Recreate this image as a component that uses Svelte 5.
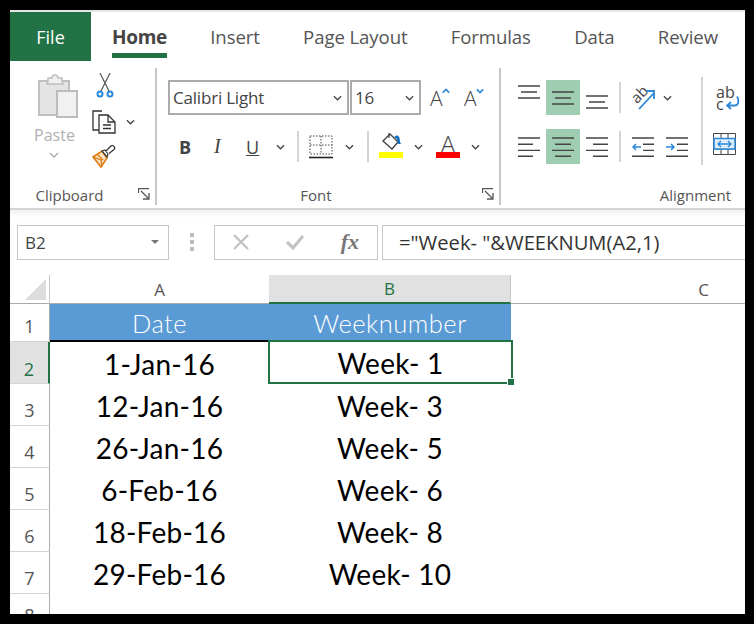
<script>
  const tabs = ["Home", "Insert", "Page Layout", "Formulas", "Data", "Review"];
  const rows = [
    { n: 2, date: "1-Jan-16", week: "Week- 1" },
    { n: 3, date: "12-Jan-16", week: "Week- 3" },
    { n: 4, date: "26-Jan-16", week: "Week- 5" },
    { n: 5, date: "6-Feb-16", week: "Week- 6" },
    { n: 6, date: "18-Feb-16", week: "Week- 8" },
    { n: 7, date: "29-Feb-16", week: "Week- 10" }
  ];
</script>

{#snippet chevron()}
  <svg class="chev" width="9" height="6" viewBox="0 0 10 6"><path d="M1 1l4 4 4-4" fill="none" stroke="#444" stroke-width="1.4"/></svg>
{/snippet}

{#snippet launcher()}
  <svg class="launcher" width="12" height="12" viewBox="0 0 12 12"><path d="M.5 5V.5H11M3 3l7 7M5 11h6V5" fill="none" stroke="#555" stroke-width="1.3"/></svg>
{/snippet}

{#snippet vlines()}
  <svg width="22" height="14" viewBox="0 0 22 14" fill="none" stroke="#444" stroke-width="1.4"><path d="M0 1h22M3 7h16M0 13h22"/></svg>
{/snippet}

{#snippet lines(kind)}
  <svg width="22" height="20" viewBox="0 0 22 20" fill="none" stroke="#444" stroke-width="1.4">
    {#if kind === "left"}
      <path d="M0 1h22M0 7.200h15M0 13.400h22M0 19.200h15"/>
    {:else if kind === "center"}
      <path d="M0 1h22M3 7.200h16M0 13.400h22M3 19.200h16"/>
    {:else}
      <path d="M0 1h22M7 7.200h15M0 13.400h22M7 19.200h15"/>
    {/if}
  </svg>
{/snippet}

<div class="frame">
  <div class="window">
    <nav class="tabs">
      <div class="file">File</div>
      {#each tabs as tab, i}
        <div class="tab" class:active={i === 0}>{tab}</div>
      {/each}
    </nav>

    <div class="ribbon">
      <section class="group clipboard">
        <div class="group-body clip-body">
          <div class="paste">
            <svg width="42" height="46" viewBox="0 0 42 46">
              <path d="M2 8h30v34H2z" fill="#e4e4e4" stroke="#c0c0c0" stroke-width="2"/>
              <path d="M11 8V5h4c0-4 6-4 6 0h4v3l1 3H10z" fill="#f0f0f0" stroke="#bdbdbd" stroke-width="1.500"/>
              <path d="M20 18h20v26H20z" fill="#f1f1f1" stroke="#bcbcbc" stroke-width="2"/>
            </svg>
            <span class="paste-label">Paste</span>
            <svg class="paste-chev" width="10" height="6" viewBox="0 0 10 6"><path d="M1 1l4 4 4-4" fill="none" stroke="#aaa" stroke-width="1.300"/></svg>
          </div>
          <div class="clip-tools">
            <svg class="scissors" width="18" height="25" viewBox="0 0 18 25" fill="none">
              <path d="M4 0l9 18M14 0L5 18" stroke="#555" stroke-width="1.200"/>
              <circle cx="4" cy="21" r="2.500" stroke="#2b88d8" stroke-width="2"/>
              <circle cx="14" cy="21" r="2.500" stroke="#2b88d8" stroke-width="2"/>
            </svg>
            <div class="copy-row">
              <svg width="25" height="25" viewBox="0 0 25 25" fill="none" stroke="#333" stroke-width="1.300">
                <path d="M7 21H1V2h9"/>
                <path d="M7 6h9l7 7v11H7z" fill="#fff"/>
                <path d="M16 6v7h7M11 16h8M11 19.500h8"/>
              </svg>
              {@render chevron()}
            </div>
            <svg width="25" height="23" viewBox="0 0 25 23" fill="none">
              <path d="M1 12l9-6 5 7-6 9z" fill="#fbe3c6" stroke="#e07c10" stroke-width="1.600"/>
              <path d="M1 12l8 3 1 7M5 9l6 6" stroke="#e07c10" stroke-width="1.300"/>
              <path d="M10 6l3-1 3 4-1 3z" fill="#fff" stroke="#333" stroke-width="1.200"/>
              <path d="M14 6l5-5c1-1 2-.5 3 .5s1 2 0 3l-5 4" fill="#fff" stroke="#333" stroke-width="1.200"/>
            </svg>
          </div>
        </div>
        <div class="group-foot"><span>Clipboard</span>{@render launcher()}</div>
      </section>

      <section class="group font">
        <div class="group-body font-body">
          <div class="font-row">
            <div class="combo face"><span>Calibri Light</span>{@render chevron()}</div>
            <div class="combo size"><span>16</span>{@render chevron()}</div>
            <div class="grow-btn">A<svg width="8" height="6" viewBox="0 0 10 6"><path d="M1 5l4-4 4 4" fill="none" stroke="#2b88d8" stroke-width="2"/></svg></div>
            <div class="grow-btn">A<svg width="8" height="6" viewBox="0 0 10 6"><path d="M1 1l4 4 4-4" fill="none" stroke="#2b88d8" stroke-width="2"/></svg></div>
          </div>
          <div class="style-row">
            <span class="fmt bold">B</span>
            <span class="fmt italic">I</span>
            <span class="fmt under">U</span>
            <span class="slot s1">{@render chevron()}</span>
            <i class="sep"></i>
            <svg class="borders" width="24" height="24" viewBox="0 0 24 24" fill="none">
              <path d="M1 1h22v18H1zM12 1v18M1 10h22" stroke="#444" stroke-width="1" stroke-dasharray="1.500 1.500"/>
              <path d="M0 22.500h24" stroke="#222" stroke-width="1.600"/>
            </svg>
            <span class="slot s2">{@render chevron()}</span>
            <i class="sep"></i>
            <div class="swatch-btn">
              <svg width="24" height="19" viewBox="0 0 24 19" fill="none">
                <path d="M4 9l7-7 8 8-6 7z" fill="#fff" stroke="#444" stroke-width="1.400"/>
                <path d="M10 1v5" stroke="#444" stroke-width="1.200"/>
                <path d="M15 5c3-3 6-2 6 5l1 2h-3l-1-5z" fill="#106ebe"/>
              </svg>
              <i class="yellow"></i>
            </div>
            <span class="slot s3">{@render chevron()}</span>
            <div class="swatch-btn color"><span>A</span><i class="red"></i></div>
            <span class="slot s4">{@render chevron()}</span>
          </div>
        </div>
        <div class="group-foot"><span class="font-label">Font</span>{@render launcher()}</div>
      </section>

      <section class="group align">
        <div class="align-grid">
          <div class="cell-btn end">{@render vlines()}</div>
          <div class="cell-btn on">{@render vlines()}</div>
          <div class="cell-btn low">{@render vlines()}</div>
          <i class="sep tall"></i>
          <div class="orient">
            <svg width="25" height="25" viewBox="0 0 25 25" fill="none">
              <text x="0" y="15" transform="rotate(-45 8 10)" font-size="15" fill="#444" font-family="Open Sans, sans-serif">ab</text>
              <path d="M8 24L23 8M15 6h8v8" stroke="#2b88d8" stroke-width="1.800"/>
            </svg>
            {@render chevron()}
          </div>
          <i class="big-sep"></i>
          <div class="wrap-icon">
            <span>ab<br />c</span>
            <svg width="14" height="14" viewBox="0 0 14 14" fill="none"><path d="M5 6L1 9.500 5 13M1 9.500h8c4 0 4-6 2-9" stroke="#2b88d8" stroke-width="1.800"/></svg>
          </div>

          <div class="cell-btn">{@render lines("left")}</div>
          <div class="cell-btn on">{@render lines("center")}</div>
          <div class="cell-btn">{@render lines("right")}</div>
          <i class="sep tall"></i>
          <div class="indents">
            <svg width="22" height="20" viewBox="0 0 22 20" fill="none"><path d="M0 1h22M11 7.200h11M11 13.400h11M0 19.200h22" stroke="#444" stroke-width="1.400"/><path d="M9 10H1M4 7l-3 3 3 3" stroke="#2b88d8" stroke-width="1.500"/></svg>
            <svg width="22" height="20" viewBox="0 0 22 20" fill="none"><path d="M0 1h22M11 7.200h11M11 13.400h11M0 19.200h22" stroke="#444" stroke-width="1.400"/><path d="M0 10h8M5 7l3 3-3 3" stroke="#2b88d8" stroke-width="1.500"/></svg>
          </div>
          <div class="merge">
            <svg width="23" height="22" viewBox="0 0 23 22" fill="none">
              <path d="M.5.500h22v21H.5zM8 .500v5M15 .500v5M8 16v5M15 16v5M.5 5.500h22M.5 16h22" stroke="#444"/>
              <path d="M1 5.500h21v10.500H1z" fill="#dcecf9" stroke="#2b88d8" stroke-width="1.500"/>
              <path d="M5 11h13M8 8l-3 3 3 3M15 8l3 3-3 3" stroke="#2b88d8" stroke-width="1.300"/>
            </svg>
          </div>
        </div>
        <div class="group-foot align-foot"><span>Alignment</span></div>
      </section>
    </div>

    <div class="formula-bar">
      <div class="name-box"><span>B2</span><i class="tri"></i></div>
      <div class="dots"><i></i><i></i><i></i></div>
      <div class="fx-buttons">
        <svg width="18" height="18" viewBox="0 0 18 18"><path d="M2 2l14 14M16 2L2 16" stroke="#c4c4c4" stroke-width="2.400"/></svg>
        <svg width="20" height="18" viewBox="0 0 20 18"><path d="M2 9l6 6L18 3" fill="none" stroke="#c4c4c4" stroke-width="3.200"/></svg>
        <span class="fx">fx</span>
      </div>
      <div class="formula">="Week- "&amp;WEEKNUM(A2,1)</div>
    </div>

    <div class="sheet">
      <div class="corner"><i></i></div>
      <div class="col">A</div>
      <div class="col sel">B</div>
      <div class="col">C</div>

      <div class="row-num first">1</div>
      <div class="cell head">Date</div>
      <div class="cell head">Weeknumber</div>
      <div class="blank"></div>

      {#each rows as row}
        <div class="row-num" class:sel={row.n === 2}>{row.n}</div>
        <div class="cell" class:under-head={row.n === 2}>{row.date}</div>
        <div class="cell" class:active={row.n === 2}>
          {row.week}
          {#if row.n === 2}<i class="handle"></i>{/if}
        </div>
        <div class="blank"></div>
      {/each}

      <div class="row-num partial">8</div>
      <div class="cell"></div>
      <div class="cell"></div>
      <div class="blank"></div>
    </div>
  </div>
</div>

<style>
  :global(body) {
    margin: 0;
    background: #000;
  }

  .frame {
    width: 754px;
    height: 624px;
    box-sizing: border-box;
    padding: 10px 9px 10px 10px;
    background: #000;
    font-family: "Open Sans", sans-serif;
    color: #444;
  }

  .window {
    height: 604px;
    background: #fff;
    overflow: hidden;
    border-top: 2px solid #e6e6e6;
    box-sizing: border-box;
  }

  .tabs {
    display: flex;
    align-items: stretch;
    height: 49px;
    gap: 43.3px;
    font-size: 18.6px;
  }

  .file {
    width: 81px;
    margin-right: -22.3px;
    background: #217346;
    color: #fff;
    font-size: 18px;
    display: flex;
    align-items: center;
    justify-content: center;
  }

  .tab {
    display: flex;
    align-items: center;
    position: relative;
    color: #555;
    letter-spacing: -0.1px;
  }

  .tab.active {
    font-weight: 700;
    font-size: 19px;
    letter-spacing: -0.3px;
    color: #444;
  }

  .tab.active::after {
    content: "";
    position: absolute;
    left: 0;
    right: 0;
    bottom: 3px;
    height: 5px;
    background: #217346;
  }

  .ribbon {
    display: flex;
    height: 149px;
    box-sizing: border-box;
    padding: 7px 0 3px;
    border-bottom: 2px solid #d4d4d4;
    overflow: hidden;
  }

  .group {
    display: flex;
    flex-direction: column;
    box-sizing: border-box;
    flex: none;
  }

  .clipboard {
    width: 147px;
    border-right: 2px solid #c6c6c6;
  }

  .font {
    width: 344px;
    border-right: 2px solid #c6c6c6;
  }

  .align {
    width: 244px;
  }

  .group-body {
    flex: 1;
  }

  .group-foot {
    height: 20px;
    display: flex;
    align-items: center;
    justify-content: center;
    position: relative;
    font-size: 15px;
    color: #555;
  }

  .launcher {
    position: absolute;
    right: 5px;
    top: 3px;
  }

  .clip-body {
    display: flex;
    padding: 5px 0 0 27px;
    gap: 13px;
  }

  .paste {
    width: 42px;
    display: flex;
    flex-direction: column;
    align-items: center;
    gap: 6px;
  }

  .paste-label {
    font-size: 16px;
    line-height: 21px;
    color: #b0b0b0;
    margin-right: 7px;
  }

  .paste-chev {
    margin-right: 9px;
  }

  .clip-tools {
    display: flex;
    flex-direction: column;
    gap: 11px;
  }

  .scissors {
    margin-left: 4px;
  }

  .copy-row {
    display: flex;
    align-items: center;
    gap: 9px;
  }

  .clipboard .group-foot {
    padding-right: 26px;
  }

  .font .group-foot {
    padding-right: 24px;
  }

  .font-body {
    display: flex;
    flex-direction: column;
    padding: 12px 0 0 11px;
    gap: 14px;
  }

  .font-row {
    display: flex;
    align-items: center;
  }

  .combo {
    height: 35px;
    box-sizing: border-box;
    border: 2px solid #ababab;
    display: flex;
    align-items: center;
    justify-content: space-between;
    padding: 0 5px 0 3px;
    font-size: 17px;
    color: #444;
    letter-spacing: -0.2px;
  }

  .face {
    width: 181px;
  }

  .size {
    width: 71px;
    margin-left: 1px;
  }

  .grow-btn {
    display: flex;
    align-items: flex-start;
    width: 34px;
    font-size: 21px;
    font-weight: 300;
    line-height: 30px;
    margin-left: 9px;
    margin-right: -9px;
  }

  .grow-btn svg {
    margin: 5px 0 0 -1px;
  }

  .style-row {
    display: flex;
    align-items: center;
    height: 35px;
    padding-left: 11px;
  }

  .fmt {
    font-size: 18px;
    color: #444;
    text-align: left;
    flex: none;
  }

  .bold {
    font-weight: 700;
    width: 35px;
  }

  .italic {
    font-family: "Liberation Serif", serif;
    font-style: italic;
    font-size: 20px;
    width: 32px;
  }

  .under {
    text-decoration: underline;
    width: 13px;
  }

  .slot {
    display: flex;
    flex: none;
    align-items: center;
  }

  .s1 {
    margin: 0 12px 0 17px;
  }

  .s2 {
    margin: 0 13px 0 12px;
  }

  .s3 {
    margin: 0 13px 0 11px;
  }

  .s4 {
    margin-left: 11px;
  }

  .sep {
    flex: none;
    width: 2px;
    height: 31px;
    background: #d4d4d4;
    display: block;
    margin-right: 10px;
  }

  .borders {
    flex: none;
  }

  .swatch-btn {
    width: 24px;
    flex: none;
    display: flex;
    flex-direction: column;
    align-items: center;
    margin-bottom: 4px;
  }

  .yellow,
  .red {
    display: block;
    width: 24px;
    height: 6px;
    background: #ffff00;
    margin-top: 1px;
  }

  .red {
    background: #ff0000;
    margin-top: -4px;
  }

  .color span {
    font-size: 24px;
    font-weight: 300;
    line-height: 25px;
    color: #444;
  }

  .align-grid {
    flex: 1;
    display: grid;
    grid-template-columns: 34px 34px 34px 7px 80px 15px auto;
    grid-template-rows: 35px 35px;
    row-gap: 14px;
    padding: 12px 0 0 11px;
    justify-items: center;
    align-items: center;
    justify-content: start;
  }

  .cell-btn {
    width: 34px;
    height: 35px;
    display: flex;
    align-items: center;
    justify-content: center;
  }

  .cell-btn.on {
    background: #9fcdb1;
  }

  .cell-btn.end {
    align-items: flex-start;
    padding-top: 5px;
    box-sizing: border-box;
  }

  .cell-btn.low {
    align-items: flex-end;
    padding-bottom: 6px;
    box-sizing: border-box;
  }

  .sep.tall {
    margin: 0;
    justify-self: end;
  }

  .orient {
    display: flex;
    align-items: center;
    gap: 7px;
    margin-left: 10px;
    justify-self: start;
  }

  .orient svg {
    overflow: visible;
  }

  .indents {
    display: flex;
    gap: 12px;
    margin-left: 11px;
    justify-self: start;
  }

  .big-sep {
    grid-row: 1 / 3;
    grid-column: 6;
    width: 2px;
    height: 88px;
    background: #d4d4d4;
    display: block;
    justify-self: start;
    align-self: start;
    margin-top: -3px;
  }

  .wrap-icon {
    grid-column: 7;
    grid-row: 1;
    display: flex;
    align-items: flex-end;
    font-size: 16px;
    line-height: 12px;
    color: #444;
    justify-self: start;
  }

  .wrap-icon svg {
    margin-left: -9px;
    position: relative;
  }

  .merge {
    grid-column: 7;
    grid-row: 2;
    justify-self: start;
    margin-left: -3px;
  }

  .align-foot {
    justify-content: flex-end;
    padding-right: 14px;
  }

  .formula-bar {
    height: 65px;
    display: flex;
    align-items: center;
    padding: 0 0 0 7px;
    background: linear-gradient(#f1f1f1, #fff 8px);
    box-sizing: border-box;
    padding-bottom: 1px;
  }

  .name-box {
    width: 152px;
    height: 35px;
    box-sizing: border-box;
    border: 1px solid #c6c6c6;
    display: flex;
    align-items: center;
    justify-content: space-between;
    padding: 0 9px 0 7px;
    font-size: 17px;
  }

  .tri {
    width: 0;
    height: 0;
    border-left: 4px solid transparent;
    border-right: 4px solid transparent;
    border-top: 4px solid #777;
  }

  .dots {
    width: 45px;
    display: flex;
    flex-direction: column;
    align-items: center;
    gap: 3px;
  }

  .dots i {
    display: block;
    width: 4px;
    height: 4px;
    background: #bbb;
  }

  .fx-buttons {
    width: 164px;
    height: 35px;
    box-sizing: border-box;
    border: 1px solid #c6c6c6;
    display: flex;
    align-items: center;
    padding: 0 18px 0 17px;
    justify-content: space-between;
  }

  .fx {
    font-family: "Liberation Serif", serif;
    font-style: italic;
    font-weight: 700;
    font-size: 22px;
    color: #777;
  }

  .formula {
    flex: 1;
    height: 35px;
    margin-left: 4px;
    box-sizing: border-box;
    border: 1px solid #c6c6c6;
    border-right: 0;
    padding-left: 16px;
    display: flex;
    align-items: center;
    font-size: 20.2px;
    color: #333;
    white-space: nowrap;
  }

  .sheet {
    display: grid;
    grid-template-columns: 40px 219px 242px 385px;
    grid-template-rows: 29px 38px repeat(7, 42px);
    overflow: hidden;
  }

  .corner {
    border-right: 1px solid #c6c6c6;
    border-bottom: 1px solid #ababab;
    position: relative;
  }

  .corner i {
    position: absolute;
    right: 3px;
    bottom: 3px;
    width: 0;
    height: 0;
    border-left: 21px solid transparent;
    border-bottom: 21px solid #dcdcdc;
  }

  .col {
    display: flex;
    align-items: center;
    justify-content: center;
    font-size: 17px;
    color: #555;
    border-bottom: 1px solid #ababab;
    box-sizing: border-box;
  }

  .col.sel {
    background: #e1e1e1;
    color: #217346;
    border-bottom: 2px solid #217346;
    border-right: 1px solid #c6c6c6;
  }

  .row-num {
    border-right: 1px solid #ababab;
    border-bottom: 1px solid #d4d4d4;
    display: flex;
    align-items: flex-end;
    justify-content: center;
    font-size: 18px;
    line-height: 27px;
    color: #555;
    box-sizing: border-box;
    padding-bottom: 1px;
  }

  .row-num.sel {
    background: #e1e1e1;
    color: #217346;
    border-right: 2px solid #217346;
    padding-bottom: 0;
  }

  .row-num.partial {
    padding-bottom: 6px;
  }

  .cell {
    display: flex;
    align-items: center;
    justify-content: center;
    font-family: "Lato", sans-serif;
    font-size: 28px;
    letter-spacing: 0.25px;
    color: #000;
    box-sizing: border-box;
    position: relative;
    padding-top: 1px;
  }

  .cell.head {
    background: #5b9bd5;
    color: #fff;
    font-size: 25.5px;
    font-weight: 300;
    letter-spacing: 0.5px;
    padding-top: 0;
  }

  .cell.under-head {
    border-top: 2px solid #000;
    margin-top: -2px;
    height: 44px;
  }

  .cell.active {
    border: 2px solid #217346;
    margin: -2px -2px 0 -1px;
    height: 44px;
    z-index: 1;
  }

  .handle {
    position: absolute;
    right: -4px;
    bottom: -4px;
    width: 6px;
    height: 6px;
    background: #217346;
    border: 1px solid #fff;
  }
</style>
